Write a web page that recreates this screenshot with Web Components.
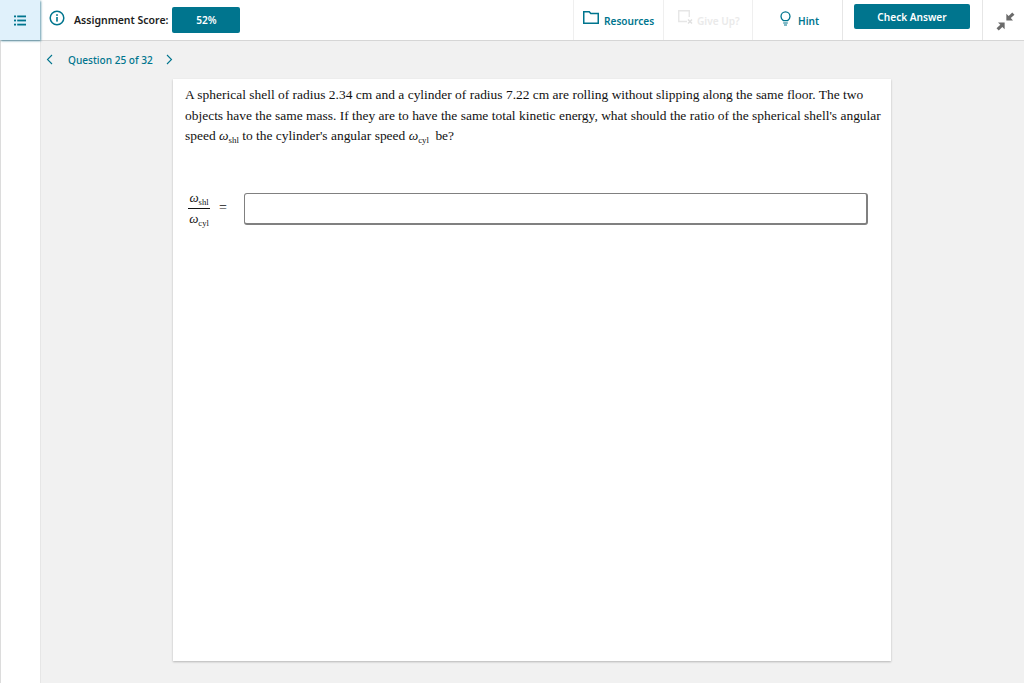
<!DOCTYPE html>
<html lang="en"><head><meta charset="utf-8"><title>Question 25 of 32</title>
<style>
html,body{margin:0;height:100%;overflow:hidden}
body{font-family:"Noto Sans","Open Sans",sans-serif;background:#f1f1f1}
</style></head><body>
<app-shell>
  <top-bar slot="top"></top-bar>
  <side-rail slot="side"></side-rail>
  <question-nav slot="nav" label="Question 25 of 32"></question-nav>
  <question-card slot="card"></question-card>
</app-shell>
<script>
function el(name,html){customElements.define(name,class extends HTMLElement{
  constructor(){super();this.attachShadow({mode:"open"}).innerHTML=typeof html==="function"?html(this):html}
})}
el("app-shell",`<style>
:host{display:grid;grid-template-columns:41px 1fr;grid-template-rows:41px 1fr;width:1024px;height:683px;background:#f1f1f1}
.top{grid-column:1/3}.main{display:flex;flex-direction:column;min-width:0}
</style><div class="top"><slot name="top"></slot></div><slot name="side"></slot>
<div class="main"><slot name="nav"></slot><slot name="card"></slot></div>`);
el("side-rail",`<style>:host{display:block;background:#fff;border-left:1px solid #dcdcdc;border-right:1px solid #e6e6e6;box-sizing:border-box}</style>`);
const T="#00758e";
el("top-bar",`<style>
:host{display:flex;height:41px;box-sizing:border-box;background:#fff;border-bottom:1px solid #d6d6d6;align-items:stretch;font-size:10.1px;font-weight:600}
.menu{width:40px;height:40px;box-sizing:border-box;background:#e0f1fb;box-shadow:1px 1px 2px rgba(0,90,120,.6);display:flex;align-items:center;justify-content:center;flex:none;position:relative}
.score{display:flex;align-items:center;padding-left:9px;flex:1;color:#1d1d1d}
.score svg{margin:-5px 9px 0 0}
.lbl{margin-right:4px;white-space:nowrap;font-size:10.5px}
.val{width:68px;height:26px;border-radius:2px;background:${T};color:#fff;display:flex;align-items:center;justify-content:center}
.cell{display:flex;align-items:center;border-left:1px solid #efefef;box-sizing:border-box;color:${T};white-space:nowrap;padding-top:1px}
.cell svg{margin-top:-6px}
.res{width:90px;padding-left:9px;gap:5px}
.give{width:89px;padding-left:14px;gap:4px;color:#eaeaea}
.hint{width:90px;padding-left:27px;gap:7px}
.hint svg{margin-top:-4px}
.check{width:141px;border-left:1px solid #e6e6e6;border-right:1px solid #e6e6e6;padding:0 0 0 11px;align-items:flex-start}
.btn{width:116px;height:25px;margin-top:4px;background:${T};border-radius:2px;color:#fff;display:flex;align-items:center;justify-content:center}
.col{width:41px;display:flex;align-items:center;justify-content:center;padding:3px 0 0 3px;box-sizing:border-box}
</style>
<div class="menu"><svg width="12" height="11" viewBox="0 0 12 11"><g fill="${T}"><rect x="0" y="0.5" width="2" height="1.8"/><rect x="0" y="4.6" width="2" height="1.8"/><rect x="0" y="8.7" width="2" height="1.8"/><rect x="3.2" y="0.5" width="8.8" height="1.8"/><rect x="3.2" y="4.6" width="8.8" height="1.8"/><rect x="3.2" y="8.7" width="8.8" height="1.8"/></g></svg></div>
<div class="score"><svg width="16" height="16" viewBox="0 0 16 16"><circle cx="8" cy="8" r="6.8" fill="none" stroke="${T}" stroke-width="1.5"/><rect x="7.2" y="7" width="1.6" height="4.6" fill="${T}"/><rect x="7.2" y="4.2" width="1.6" height="1.7" fill="${T}"/></svg>
<span class="lbl">Assignment Score:</span><span class="val">52%</span></div>
<div class="cell res"><svg width="16" height="13" viewBox="0 0 16 13"><path d="M.75 12.25V.75h5.5l1.5 1.8h7.5v9.7z" fill="none" stroke="${T}" stroke-width="1.5"/></svg><span>Resources</span></div>
<div class="cell give"><svg width="15" height="15" viewBox="0 0 15 15"><path d="M9 11.5H.75V.75h10.5V7" fill="none" stroke="#e6e6e6" stroke-width="1.4"/><path d="M10 9.5l4 4m0-4l-4 4" stroke="#e0e0e0" stroke-width="1.5"/></svg><span>Give Up?</span></div>
<div class="cell hint"><svg width="11" height="15" viewBox="0 0 11 15"><path d="M3.4 9.6C2 8.6 1 7.3 1 5.4a4.5 4.5 0 0 1 9 0c0 1.9-1 3.2-2.400 4.200z" fill="none" stroke="${T}" stroke-width="1.300"/><path d="M3.200 12h4.600M4 14h3" stroke="${T}" stroke-width="1.200"/></svg><span>Hint</span></div>
<div class="cell check"><div class="btn">Check Answer</div></div>
<div class="col"><svg style="margin:0" width="19" height="19" viewBox="0 0 18 18" fill="#6b6b6b"><path d="M17.500 2.600L15.400.5 12 3.900 9.800 1.700V8h6.300l-2.100-2.200z"/><path d="M.5 15.400l2.100 2.100L6 14.100l2.200 2.200V10H1.900l2.200 2z"/></svg></div>`);
el("question-nav",h=>`<style>
:host{display:flex;align-items:center;height:37px;font-size:10.1px;font-weight:500;color:${T};padding-left:5px;box-sizing:border-box}
span{margin:0 13px 0 15px;white-space:nowrap}svg{display:block}
</style><svg width="7" height="11" viewBox="0 0 7 11"><path d="M6 1L1.500 5.500 6 10" fill="none" stroke="${T}" stroke-width="1.100"/></svg>
<span>${h.getAttribute("label")}</span><svg width="7" height="11" viewBox="0 0 7 11"><path d="M1 1l4.500 4.500L1 10" fill="none" stroke="${T}" stroke-width="1.100"/></svg>`);
el("math-w",h=>`<style>:host{display:inline;font-family:"Liberation Serif",serif;font-style:italic}
sub{font-style:normal;font-size:.66em;vertical-align:-.3em;line-height:0;color:inherit}</style>ω<sub>${h.getAttribute("s")}</sub>`);
el("question-card",`<style>
:host{display:block;width:718px;height:582px;box-sizing:border-box;margin:1px 0 0 132px;background:#fff;box-shadow:0 1px 2px rgba(0,0,0,.25);padding:6px 11px 0 12px;font:13.46px/20.5px "Liberation Serif",serif;color:#111}
p{margin:0;white-space:nowrap}
.be{margin-left:3px}
.row{display:flex;align-items:center;margin-top:45px}
.frac{display:flex;flex-direction:column;align-items:center;width:26px;margin:-1px 0 0 1px;font-size:13px;line-height:14px}
.frac div{padding:0 1px}.frac .n{border-bottom:1px solid #111;padding-bottom:3px;margin-bottom:3px}
.eq{width:10px;margin-left:7px;font-size:14px}
.inp{width:624px;height:32px;box-sizing:border-box;border:1px solid #808080;border-right-width:2px;border-bottom-width:2px;border-radius:3px;margin-left:15px;background:#fff}
</style>
<p>A spherical shell of radius 2.34 cm and a cylinder of radius 7.22 cm are rolling without slipping along the same floor. The two</p>
<p>objects have the same mass. If they are to have the same total kinetic energy, what should the ratio of the spherical shell's angular</p>
<p>speed <math-w s="shl"></math-w> to the cylinder's angular speed <math-w s="cyl"></math-w> <span class="be">be?</span></p>
<div class="row"><div class="frac"><div class="n"><math-w s="shl"></math-w></div><div><math-w s="cyl"></math-w></div></div><span class="eq">=</span><div class="inp"></div></div>`);
</script></body></html>
